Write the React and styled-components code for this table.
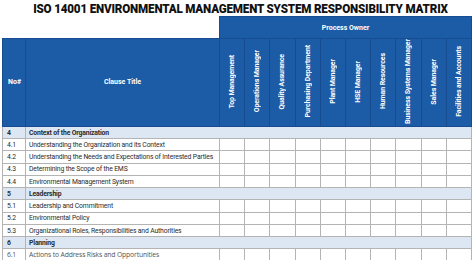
import styled, { createGlobalStyle } from "styled-components"

const GlobalStyle = createGlobalStyle`
  body {
    margin: 0;
    background: #ffffff;
    font-family: Roboto, "Liberation Sans", sans-serif;
  }
`

const Page = styled.div`
  width: 474px;
  height: 260px;
  overflow: hidden;
  background: #fff;
`

const Title = styled.h1`
  margin: 0;
  height: 16px;
  line-height: 17px;
  text-align: center;
  font-size: 13.5px;
  font-weight: 900;
  color: #111;
  letter-spacing: -0.2px;
  white-space: nowrap;
  transform: scaleX(0.86);
`

const Table = styled.table`
  margin-left: 2px;
  width: 470px;
  border-collapse: collapse;
  table-layout: fixed;
`

const HeadCell = styled.th`
  background: #1c5ba6;
  color: #fff;
  font-size: 7px;
  font-weight: 700;
  border: 1px solid #174d90;
  padding: 0;
  height: ${(p) => p.$h || 86}px;
  text-align: ${(p) => (p.$left ? "left" : "center")};
  padding-left: ${(p) => (p.$left ? "5px" : "0")};
  white-space: nowrap;
`

const Blank = styled.th`
  background: #fff;
  border: none;
  padding: 0;
`

const Vertical = styled.span`
  display: inline-block;
  writing-mode: vertical-rl;
  transform: rotate(180deg);
  letter-spacing: -0.1px;
`

const Row = styled.tr`
  height: 12.25px;
  background: ${(p) => (p.$section ? "#dde7f3" : "#fff")};
`

const Cell = styled.td`
  border: 1px solid #b4b4b4;
  padding: 0 0 0 ${(p) => (p.$pad ? p.$pad : 0)}px;
  font-size: 6.8px;
  line-height: 10px;
  color: ${(p) => (p.$faint ? "#555" : "#2b2b2b")};
  font-weight: ${(p) => (p.$bold ? 700 : 400)};
  font-family: ${(p) => (p.$alt ? '"Open Sans", "Liberation Sans", sans-serif' : "inherit")};
  letter-spacing: ${(p) => (p.$alt ? "-0.15px" : "-0.15px")};
  white-space: nowrap;
  overflow: hidden;
`

const roles = [
  "Top Management",
  "Operations Manager",
  "Quality Assurance",
  "Purchasing Department",
  "Plant Manager",
  "HSE Manager",
  "Human Resources",
  "Business Systems Manager",
  "Sales Manager",
  "Facilities and Accounts",
]

const rows = [
  { no: "4", title: "Context of the Organization", section: true },
  { no: "4.1", title: "Understanding the Organization and its Context" },
  { no: "4.2", title: "Understanding the Needs and Expectations of Interested Parties" },
  { no: "4.3", title: "Determining the Scope of the EMS" },
  { no: "4.4", title: "Environmental Management System" },
  { no: "5", title: "Leadership", section: true },
  { no: "5.1", title: "Leadership and Commitment" },
  { no: "5.2", title: "Environmental Policy" },
  { no: "5.3", title: "Organizational Roles, Responsibilities and Authorities" },
  { no: "6", title: "Planning", section: true },
  { no: "6.1", title: "Actions to Address Risks and Opportunities", alt: true },
]

export default function App() {
  return (
    <Page>
      <GlobalStyle />
      <Title>ISO 14001 ENVIRONMENTAL MANAGEMENT SYSTEM RESPONSIBILITY MATRIX</Title>
      <Table>
        <colgroup>
          <col style={{ width: 23 }} />
          <col style={{ width: 194 }} />
          {roles.map((r) => (
            <col key={r} />
          ))}
        </colgroup>
        <thead>
          <tr>
            <Blank colSpan={2} />
            <HeadCell colSpan={10} $h={21}>Process Owner</HeadCell>
          </tr>
          <tr>
            <HeadCell $left>No#</HeadCell>
            <HeadCell>Clause Title</HeadCell>
            {roles.map((r) => (
              <HeadCell key={r}>
                <Vertical>{r}</Vertical>
              </HeadCell>
            ))}
          </tr>
        </thead>
        <tbody>
          {rows.map((row) =>
            row.section ? (
              <Row key={row.no} $section>
                <Cell $pad={4} $bold>{row.no}</Cell>
                <Cell $pad={3} $bold colSpan={11}>{row.title}</Cell>
              </Row>
            ) : (
              <Row key={row.no}>
                <Cell $pad={4} $alt={row.alt} $faint={row.alt}>{row.no}</Cell>
                <Cell $pad={3} $alt={row.alt} $faint={row.alt}>{row.title}</Cell>
                {roles.map((r) => (
                  <Cell key={r} />
                ))}
              </Row>
            )
          )}
        </tbody>
      </Table>
    </Page>
  )
}
